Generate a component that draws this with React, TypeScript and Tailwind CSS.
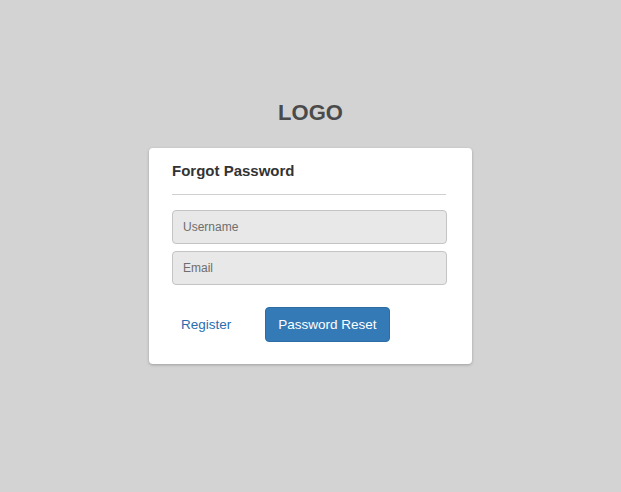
import React from "react";

export default function App() {
  return (
    <div
      className="min-h-[492px] w-full bg-[#d3d3d3] flex flex-col items-center pt-[100px]"
      style={{ fontFamily: '"Liberation Sans", Arial, sans-serif' }}
    >
      <div className="text-[22px] leading-[26px] font-bold text-[#4a4a4a] mb-[22px]">LOGO</div>
      <div className="w-[323px] bg-white rounded-[4px] shadow-[0_1px_3px_rgba(0,0,0,0.25)] pt-[13px] pb-[22px] pl-[23px] pr-[25px]">
        <div className="text-[15px] leading-[20px] font-bold text-[#333333]">Forgot Password</div>
        <div className="mt-[13px] mb-[15px] mr-[1px] h-px bg-[#cfcfcf]" />
        <input
          className="block w-full h-[34px] mb-[7px] rounded-[4px] border border-[#c4c4c4] bg-[#e8e8e8] px-[10px] text-[12px] text-[#555] placeholder:text-[#6e6e6e] outline-none"
          placeholder="Username"
        />
        <input
          className="block w-full h-[34px] rounded-[4px] border border-[#c4c4c4] bg-[#e8e8e8] px-[10px] text-[12px] text-[#555] placeholder:text-[#6e6e6e] outline-none"
          placeholder="Email"
        />
        <div className="mt-[22px] flex items-center">
          <a className="ml-[9px] pt-[1px] text-[13.5px] text-[#2a6eb0] cursor-pointer">Register</a>
          <button className="ml-[34px] h-[35px] px-[12px] pt-[1px] rounded-[4px] bg-[#337ab7] border border-[#2e6da4] text-white text-[13.5px]">
            Password Reset
          </button>
        </div>
      </div>
    </div>
  );
}
